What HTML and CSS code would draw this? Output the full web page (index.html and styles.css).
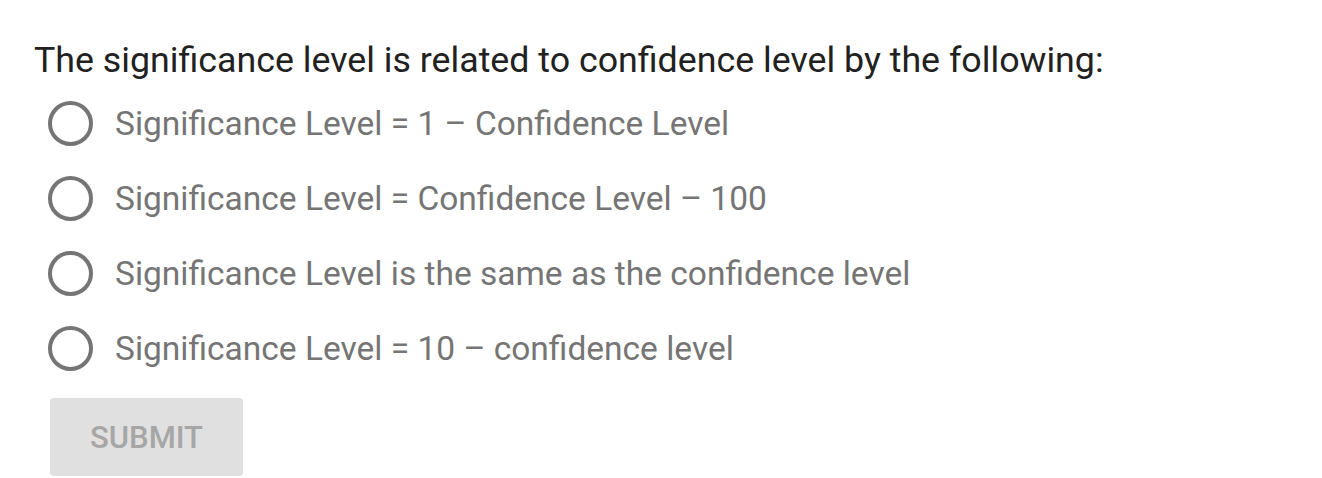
FILE: index.html
```html
<!DOCTYPE html>
<html lang="en">
<head>
    <meta charset="UTF-8">
    <title>Quiz</title>
    <link rel="stylesheet" href="styles.css">
</head>
<body>
    <div class="question">
        <p class="prompt">The significance level is related to confidence level by the following:</p>
        <div class="options">
            <label class="option"><span class="radio"></span>Significance Level = 1 &ndash; Confidence Level</label>
            <label class="option"><span class="radio"></span>Significance Level = Confidence Level &ndash; 100</label>
            <label class="option"><span class="radio"></span>Significance Level is the same as the confidence level</label>
            <label class="option"><span class="radio"></span>Significance Level = 10 &ndash; confidence level</label>
        </div>
        <button class="submit" disabled>SUBMIT</button>
    </div>
</body>
</html>
```

FILE: styles.css
```css
body {
    margin: 0;
    background: #fff;
    font-family: Roboto, Arial, sans-serif;
}

.question {
    padding: 39px 0 0 34px;
}

.prompt {
    margin: 0;
    font-size: 35.75px;
    line-height: 42px;
    color: #212121;
}

.options {
    display: flex;
    flex-direction: column;
    margin-top: 5px;
}

.option {
    display: flex;
    align-items: center;
    height: 75px;
    padding-left: 14px;
    font-size: 33.5px;
    color: #757575;
}

.radio {
    box-sizing: border-box;
    width: 45px;
    height: 45px;
    border: 4px solid #757575;
    border-radius: 50%;
    margin-right: 22px;
}

.submit {
    margin: 12px 0 0 16px;
    width: 193px;
    height: 78px;
    border: none;
    border-radius: 4px;
    background: #e0e0e0;
    color: #a6a6a6;
    font-family: Roboto, Arial, sans-serif;
    font-size: 31px;
    font-weight: 500;
}
```
